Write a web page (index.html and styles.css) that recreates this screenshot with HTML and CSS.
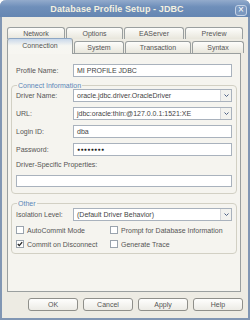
FILE: index.html
```html
<!DOCTYPE html>
<html lang="en">
<head>
    <meta charset="UTF-8">
    <title>Database Profile Setup - JDBC</title>
    <link rel="stylesheet" href="styles.css">
</head>
<body>
<div class="window">
    <div class="titlebar">
        <span class="title">Database Profile Setup - JDBC</span>
        <span class="close">&times;</span>
    </div>
    <div class="tabs">
        <div class="tab-row back">
            <div class="tab w58">Network</div>
            <div class="tab w57">Options</div>
            <div class="tab w60">EAServer</div>
            <div class="tab w58">Preview</div>
        </div>
        <div class="tab-row front">
            <div class="tab active w66">Connection</div>
            <div class="tab w50">System</div>
            <div class="tab w66">Transaction</div>
            <div class="tab w52">Syntax</div>
        </div>
    </div>
    <div class="panel">
        <!-- Profile name -->
        <div class="row top-row">
            <label>Profile Name:</label>
            <div class="field">MI PROFILE JDBC</div>
        </div>

        <fieldset class="group connect">
            <legend>Connect Information</legend>
            <div class="row">
                <label>Driver Name:</label>
                <div class="field combo"><span class="val">oracle.jdbc.driver.OracleDriver</span><span class="drop"><svg width="5" height="3" viewBox="0 0 5 3"><polyline points="0.5,0.5 2.5,2.5 4.5,0.5" fill="none" stroke="#4d6185" stroke-width="1"/></svg></span></div>
            </div>
            <div class="row">
                <label>URL:</label>
                <div class="field combo"><span class="val">jdbc:oracle:thin:@127.0.0.1:1521:XE</span><span class="drop"><svg width="5" height="3" viewBox="0 0 5 3"><polyline points="0.5,0.5 2.5,2.5 4.5,0.5" fill="none" stroke="#4d6185" stroke-width="1"/></svg></span></div>
            </div>
            <div class="row">
                <label>Login ID:</label>
                <div class="field">dba</div>
            </div>
            <div class="row">
                <label>Password:</label>
                <div class="field pass">&#9679;&#9679;&#9679;&#9679;&#9679;&#9679;&#9679;&#9679;</div>
            </div>
            <div class="props-label">Driver-Specific Properties:</div>
            <div class="field wide"></div>
        </fieldset>

        <fieldset class="group other">
            <legend>Other</legend>
            <div class="row">
                <label>Isolation Level:</label>
                <div class="field combo"><span class="val">(Default Driver Behavior)</span><span class="drop"><svg width="5" height="3" viewBox="0 0 5 3"><polyline points="0.5,0.5 2.5,2.5 4.5,0.5" fill="none" stroke="#4d6185" stroke-width="1"/></svg></span></div>
            </div>
            <div class="checks">
                <div class="check"><span class="box"></span>AutoCommit Mode</div>
                <div class="check"><span class="box"></span>Prompt for Database Information</div>
                <div class="check"><span class="box"><svg width="6" height="6" viewBox="0 0 6 6"><polyline points="0.8,3 2.3,4.6 5.2,1.2" fill="none" stroke="#222" stroke-width="1.3"/></svg></span>Commit on Disconnect</div>
                <div class="check"><span class="box"></span>Generate Trace</div>
            </div>
        </fieldset>
    </div>
    <div class="buttons">
        <button class="btn">OK</button>
        <button class="btn">Cancel</button>
        <button class="btn">Apply</button>
        <button class="btn">Help</button>
    </div>
</div>
</body>
</html>
```

FILE: styles.css
```css
body {
    margin: 0;
    padding: 0;
    font-family: "Liberation Sans", Arial, sans-serif;
    background-color: #fff;
}
.window {
    width: 250px;
    height: 320px;
    box-sizing: border-box;
    background-color: #edebe3;
    border-left: 2px solid #8196b3;
    border-right: 2px solid #8196b3;
    border-bottom: 2px solid #8196b3;
    border-radius: 6px 6px 0 0;
    display: flex;
    flex-direction: column;
}
.titlebar {
    height: 17px;
    margin: 0 -2px;
    padding-right: 16px;
    border-radius: 6px 6px 0 0;
    background: linear-gradient(#93abcc, #6f8fba 40%, #6586b2);
    display: flex;
    align-items: center;
    justify-content: center;
    position: relative;
}
.title {
    color: #f4f1e0;
    font-weight: bold;
    font-size: 9px;
    letter-spacing: 0.1px;
}
.close {
    position: absolute;
    right: 3px;
    top: 5px;
    width: 12px;
    height: 11px;
    box-sizing: border-box;
    border: 1px solid #c4d2e6;
    border-radius: 3px;
    color: #fff;
    font-size: 10px;
    line-height: 8px;
    text-align: center;
    background-color: #7b98bf;
}
.tabs {
    margin-top: 10px;
    padding-left: 5px;
}
.tab-row {
    display: flex;
}
.tab-row.back {
    height: 12px;
}
.tab-row.front {
    height: 15px;
    margin-top: -1px;
    align-items: flex-end;
}
.tab {
    box-sizing: border-box;
    height: 12px;
    margin-right: 1px;
    border: 1px solid #9a9f9f;
    border-bottom: none;
    border-radius: 3px 3px 0 0;
    background: linear-gradient(#fdfdfb, #e8e6dc);
    color: #555;
    font-size: 7px;
    text-align: center;
    line-height: 11px;
}
.tab.active {
    height: 16px;
    margin-bottom: -1px;
    background: linear-gradient(#c9d8ea, #f6f6f2 45%, #f7f6f1);
    border-color: #8da6c4 #9a9f9f #9a9f9f;
    position: relative;
    z-index: 2;
    line-height: 13px;
}
.w50 { width: 50px; }
.w52 { width: 52px; }
.w57 { width: 57px; }
.w58 { width: 58px; }
.w60 { width: 60px; }
.w66 { width: 66px; }

.panel {
    margin-left: 5px;
    width: 234px;
    height: 239px;
    box-sizing: border-box;
    border: 1px solid #9a9f9f;
    background-color: #f5f4ef;
    padding: 10px 3px 0 3px;
    position: relative;
    z-index: 1;
}
.row {
    display: flex;
    align-items: center;
    justify-content: space-between;
    height: 13px;
    margin-bottom: 5px;
}
.top-row {
    padding: 0 5px 0 5px;
    margin-bottom: 5px;
}
label, .props-label, .check {
    font-size: 7px;
    color: #555;
}
.field {
    box-sizing: border-box;
    width: 159px;
    height: 13px;
    border: 1px solid #a9b2bd;
    background-color: #fff;
    font-size: 7px;
    color: #444;
    padding-left: 3px;
    line-height: 11px;
    display: flex;
    align-items: center;
}
.combo {
    justify-content: space-between;
    padding-right: 0;
}
.drop {
    width: 10px;
    height: 11px;
    border-left: 1px solid #d4d6da;
    background-color: #f2f2ee;
    display: flex;
    align-items: center;
    justify-content: center;
}
.pass {
    font-size: 5px;
    letter-spacing: 0.4px;
    color: #222;
}
.wide {
    width: 216px;
    height: 12px;
}
.group {
    margin: 0;
    border: 1px solid #d2d0c4;
    border-radius: 4px;
    padding: 3px 4px 3px 4px;
}
.group legend {
    font-size: 7px;
    color: #5a86b8;
    padding: 0 1px;
    margin-left: 1px;
}
.connect {
    height: 112px;
    box-sizing: border-box;
    padding-top: 0;
}
.props-label {
    margin: 4px 0 7px 0;
}
.other {
    margin-top: 6px;
    height: 54px;
    box-sizing: border-box;
    padding-top: 1px;
}
.checks {
    display: grid;
    grid-template-columns: 94px 1fr;
    row-gap: 6px;
}
.check {
    display: flex;
    align-items: center;
    gap: 3px;
}
.box {
    width: 8px;
    height: 8px;
    box-sizing: border-box;
    border: 1px solid #9aa3ad;
    background-color: #fff;
    display: flex;
    align-items: center;
    justify-content: center;
}
.buttons {
    display: flex;
    justify-content: flex-end;
    gap: 5px;
    padding-right: 5px;
    margin-top: 6px;
}
.btn {
    width: 50px;
    height: 13px;
    padding: 0;
    border: 1px solid #8f8f8a;
    border-radius: 3px;
    background: linear-gradient(#fefefd, #ecebe5);
    font-family: "Liberation Sans", Arial, sans-serif;
    font-size: 7px;
    color: #555;
}
```
